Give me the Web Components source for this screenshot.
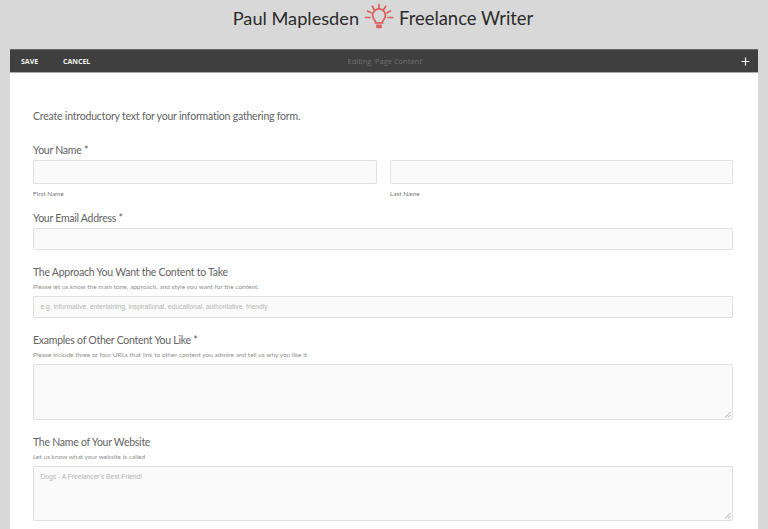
<!DOCTYPE html>
<html lang="en">
<head>
<meta charset="utf-8">
<title>Editing Page Content</title>
<style>
html,body{margin:0;padding:0;height:100%;overflow:hidden;background:#d8d8d8}
body{font-family:"Lato",sans-serif;color:#555}
</style>
</head>
<body>
<site-header>
  <span slot="left">Paul Maplesden</span>
  <span slot="right" style="font-size:18.400px">Freelance Writer</span>
</site-header>
<editor-card>
  <editor-bar label="Editing 'Page Content'"></editor-bar>
  <form-body>
    <intro-text>Create introductory text for your information gathering form.</intro-text>
    <form-group label="Your Name *" style="--gap:3px;margin-top:20px">
      <name-row>
        <sub-field caption="First Name"></sub-field>
        <sub-field caption="Last Name"></sub-field>
      </name-row>
    </form-group>
    <form-group label="Your Email Address *" style="--gap:3px;margin-top:12px">
      <text-box></text-box>
    </form-group>
    <form-group label="The Approach You Want the Content to Take" hint="Please let us know the main tone, approach, and style you want for the content." style="margin-top:15px">
      <text-box>e.g. informative, entertaining, inspirational, educational, authoritative, friendly</text-box>
    </form-group>
    <form-group label="Examples of Other Content You Like *" hint="Please include three or four URLs that link to other content you admire and tell us why you like it" style="margin-top:15px">
      <text-box multi h="56"></text-box>
    </form-group>
    <form-group label="The Name of Your Website" hint="Let us know what your website is called" style="margin-top:15px">
      <text-box multi h="55">Dogs - A Freelancer's Best Friend!</text-box>
    </form-group>
  </form-body>
</editor-card>
<script>
function def(name, html, extra){
  customElements.define(name, class extends HTMLElement{
    constructor(){super();this.attachShadow({mode:'open'}).innerHTML=html;}
    connectedCallback(){ if(extra) extra.call(this,this.shadowRoot); }
  });
}
def('site-header',`<style>
:host{display:flex;justify-content:center;align-items:center;height:36px;padding:0 2px 13px 0;gap:4px;font:400 18.200px "Lato",sans-serif;color:#2b2b2b}
svg{display:block;margin-top:-4px}
</style><slot name="left"></slot>
<svg width="32" height="30" viewBox="0 0 32 30" fill="none" stroke="#d9605c" stroke-width="1.700" stroke-linecap="round" aria-hidden="true">
<path d="M12.600 21.800c0-2.600-3-3.600-3-7.500a6.400 6.400 0 0 1 12.800 0c0 3.900-3 4.900-3 7.500z"/>
<path d="M13.200 23.500h5.600v2.800c0 .6-.4 1-1 1h-3.600c-.6 0-1-.4-1-1z" fill="#d9605c" stroke="none"/>
<path d="M16 3.500v3.800M9.300 5.300l2 3.400M22.700 5.300l-2 3.400M4.600 9.900l3.400 1.900M27.400 9.900l-3.400 1.900M2.500 16.500h4.500M25 16.500h4.500"/>
</svg><slot name="right"></slot>`);
def('editor-card',`<style>
:host{display:block;margin:0 10px;background:#fff;height:480px;overflow:hidden}
</style><slot></slot>`);
def('editor-bar',`<style>
:host{display:grid;grid-template-columns:1fr auto 1fr;align-items:center;height:24px;box-sizing:border-box;background:#3f3f3f;border-top:1px solid #666;border-bottom:1px solid #aaa;padding:0 8px 0 11px;color:#f2f2f2;font:700 7px "Open Sans",sans-serif}
.l{display:flex}
.a{width:42px}
.t{font:400 7.500px "Open Sans",sans-serif;color:#6f6f6f}
svg{display:block;justify-self:end}
</style><div class="l"><span class="a">SAVE</span><span>CANCEL</span></div><span class="t"></span>
<svg width="9" height="9" viewBox="0 0 9 9" stroke="#f0f0f0" stroke-width="1.200"><path d="M4.500 .5v8M.5 4.500h8"/></svg>`,
function(r){r.querySelector('.t').textContent=this.getAttribute('label');});
def('form-body',`<style>
:host{display:block;padding:37px 25px 0 23px}
</style><slot></slot>`);
def('intro-text',`<style>
:host{display:block;font:400 10.500px/13px "Lato",sans-serif;letter-spacing:-.2px;color:#636363}
</style><slot></slot>`);
def('form-group',`<style>
:host{display:block}
.l{font:400 10.500px/14px "Lato",sans-serif;letter-spacing:-.25px;color:#636363;display:block}
.h{font:400 6.500px/10px "Lato",sans-serif;color:#8f8f8f;display:block;margin:3px 0 4px}
.s{height:var(--gap,0);display:block}
</style><span class="l"></span><span class="h"></span><span class="s"></span><slot></slot>`,
function(r){
  r.querySelector('.l').textContent=this.getAttribute('label');
  const h=r.querySelector('.h');
  if(this.hasAttribute('hint')) h.textContent=this.getAttribute('hint'); else h.remove();
});
def('name-row',`<style>
:host{display:grid;grid-template-columns:344px 343px;column-gap:13px}
</style><slot></slot>`);
def('sub-field',`<style>
:host{display:block}
.c{display:block;font:400 6.400px/10px "Lato",sans-serif;color:#777;margin-top:5px}
</style><text-box></text-box><span class="c"></span>`,
function(r){r.querySelector('.c').textContent=this.getAttribute('caption');});
def('text-box',`<style>
:host{display:block;box-sizing:border-box;height:22px;background:#fafafa;border:1px solid #e0e0e0;border-radius:2px;padding:0 6.500px;font:400 6.700px/20px "Liberation Sans",sans-serif;color:#b4b4b4;overflow:hidden;position:relative}
:host([multi]){line-height:14px;padding-top:3px}
svg{position:absolute;right:1px;bottom:1px;display:none}
:host([multi]) svg{display:block}
</style><slot></slot><svg width="7" height="7" viewBox="0 0 7 7" stroke="#8f8f8f" stroke-width=".8"><path d="M1 6.500L6.500 1M4 6.500L6.500 4"/></svg>`,
function(){
  if(this.hasAttribute('h')) this.style.height=this.getAttribute('h')+'px';
  if(this.parentNode.host && this.parentNode.host.localName==='sub-field') this.style.height='24px';
});
</script>
</body>
</html>
